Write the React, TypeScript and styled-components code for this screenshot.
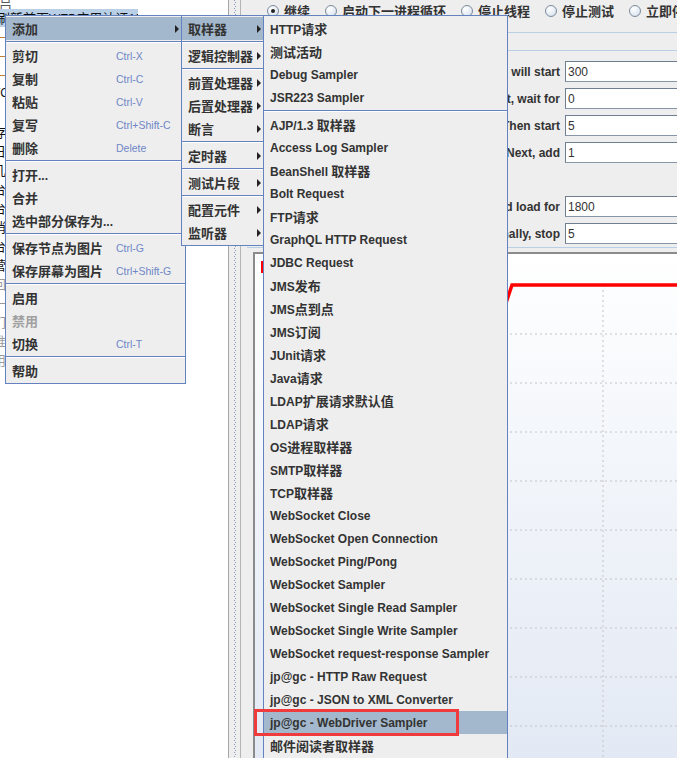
import React from "react";
import styled, { createGlobalStyle } from "styled-components";

const GlobalStyle = createGlobalStyle`
  * {
    box-sizing: border-box;
  }
  html,
  body {
    margin: 0;
    padding: 0;
    background: #eeeeee;
  }
  body {
    font-family: "Liberation Sans", "Noto Sans CJK SC", sans-serif;
    font-size: 12px;
    color: #333333;
  }
`;

// CJK runs are drawn a touch larger than the latin text, like the Swing Dialog font
const Han = styled.span`
  font-family: "Noto Sans CJK SC", sans-serif;
  font-size: 13px;
`;

const HAN_RUN = /([\u2e80-\u9fff\uff00-\uffef]+)/;

const Txt = ({ children }: { children: string }) => (
  <>
    {children.split(HAN_RUN).map((part, i) =>
      !part ? null : HAN_RUN.test(part) ? (
        <Han key={i}>{part}</Han>
      ) : (
        <span key={i}>{part}</span>
      )
    )}
  </>
);

const Screen = styled.div`
  position: relative;
  width: 677px;
  height: 758px;
  overflow: hidden;
  display: flex;
  background: #eeeeee;
`;

/* ---------- tree (left) ---------- */

const TreePane = styled.div`
  width: 228px;
  flex: none;
  background: #ffffff;
  overflow: hidden;
  padding-top: 0;
`;

const TreeRow = styled.div<{ $selected?: boolean; $muted?: boolean; $tone?: string; $h?: number }>`
  height: ${(p) => p.$h ?? 19}px;
  line-height: ${(p) => p.$h ?? 19}px;
  width: ${(p) => (p.$selected ? "138px" : "auto")};
  white-space: nowrap;
  overflow: hidden;
  text-indent: ${(p) => (p.$selected ? -3 : -7)}px;
  color: ${(p) => p.$tone ?? (p.$muted ? "#9a9a9a" : "#111111")};
  background: ${(p) => (p.$selected ? "#b8cfe5" : "transparent")};
`;

const TopStub = styled.div`
  height: 9px;
  line-height: 9px;
  overflow: hidden;
  color: #555555;
  font-size: 13px;
  text-indent: -1px;
`;

const Splitter = styled.div`
  width: 13px;
  flex: none;
  border-left: 1px solid #a5a5a5;
  border-right: 1px solid #b5b5b5;
  background-color: #eeeeee;
  background-image: repeating-linear-gradient(
      to bottom,
      #8c9db5 0 1px,
      transparent 1px 4px
    ),
    repeating-linear-gradient(
      to bottom,
      transparent 0 2px,
      #8c9db5 2px 3px,
      transparent 3px 4px
    );
  background-size: 1px 100%, 1px 100%;
  background-position: 5px 0, 6px 0;
  background-repeat: no-repeat;
`;

/* ---------- right pane ---------- */

const RightPane = styled.div`
  flex: 1;
  min-width: 0;
  display: flex;
  flex-direction: column;
`;

const ActionPanel = styled.div`
  height: 33px;
  margin-left: 6px;
  border-bottom: 1px solid #b8cfe5;
`;

const RadioRow = styled.div`
  height: 21px;
  display: flex;
  align-items: center;
  gap: 15px;
  padding-left: 20px;
  white-space: nowrap;
`;

const RadioOption = styled.label`
  display: flex;
  align-items: center;
  gap: 5px;
  font-weight: bold;
`;

const RadioDot = styled.span<{ $on?: boolean }>`
  position: relative;
  width: 12px;
  height: 12px;
  border-radius: 50%;
  border: 1px solid #7d8c9c;
  background: radial-gradient(circle at 35% 30%, #ffffff 0%, #e4ebf3 60%, #c3d1e0 100%);
  &::after {
    content: "";
    display: ${(p) => (p.$on ? "block" : "none")};
    position: absolute;
    left: 3px;
    top: 3px;
    width: 4px;
    height: 4px;
    border-radius: 50%;
    background: #222222;
  }
`;

const ParamPanel = styled.div`
  margin: 17px 0 0 6px;
  padding-top: 7px;
  border-top: 1px solid #b8cfe5;
  border-bottom: 1px solid #b8cfe5;
`;

const FormRow = styled.div`
  height: 27px;
  display: grid;
  grid-template-columns: 313px 1fr;
  column-gap: 5px;
  align-items: center;
`;

const FieldLabel = styled.span`
  text-align: right;
  font-weight: bold;
  white-space: nowrap;
`;

const Field = styled.input`
  width: 220px;
  height: 21px;
  padding: 0 2px;
  border: 1px solid #8796a6;
  border-top-color: #6f7f90;
  border-left-color: #6f7f90;
  background: #ffffff;
  font: 12px "Liberation Sans", sans-serif;
  color: #333333;
  outline: none;
`;

const ChartBox = styled.div`
  flex: 1;
  margin: 4px 0 0 12px;
  border-top: 2px solid #8b8b8b;
  border-left: 2px solid #8b8b8b;
  background: linear-gradient(#ffffff 0%, #f4f7fb 35%, #e3e9f4 100%);
  overflow: hidden;
  svg {
    display: block;
  }
`;

/* ---------- popup menus ---------- */

const Popup = styled.div<{ $x: number; $w: number; $z: number; $padR: number; $labelW: number }>`
  position: absolute;
  left: ${(p) => p.$x}px;
  top: 15px;
  width: ${(p) => p.$w}px;
  z-index: ${(p) => p.$z};
  padding: 1px 0;
  background: #eeeeee;
  border: 1px solid #6382bf;
  --pad-r: ${(p) => p.$padR}px;
  --label-w: ${(p) => p.$labelW}px;
`;

const Item = styled.div<{ $active?: boolean; $disabled?: boolean }>`
  height: 23px;
  display: flex;
  align-items: center;
  padding: 0 var(--pad-r) 0 6px;
  white-space: nowrap;
  font-weight: bold;
  color: ${(p) => (p.$disabled ? "#a0a0a0" : "#333333")};
  background: ${(p) => (p.$active ? "#a3b8cc" : "transparent")};
`;

const ItemLabel = styled.span`
  min-width: var(--label-w);
`;

const Accel = styled.span`
  font-weight: normal;
  font-size: 10.5px;
  color: #6f87c6;
`;

const Arrow = styled.span`
  margin-left: auto;
  width: 0;
  height: 0;
  border-top: 4px solid transparent;
  border-bottom: 4px solid transparent;
  border-left: 4px solid #222222;
`;

const Sep = styled.div`
  margin: 1px 0;
  border-top: 1px solid #6382bf;
  border-bottom: 1px solid #ffffff;
`;

const Callout = styled.div`
  position: absolute;
  left: 254px;
  top: 709px;
  width: 205px;
  height: 27px;
  border: 3px solid #ef3b3b;
  z-index: 4;
  pointer-events: none;
`;

type Entry =
  | "sep"
  | { label: string; accel?: string; sub?: boolean; active?: boolean; disabled?: boolean };

const editMenu: Entry[] = [
  { label: "添加", sub: true, active: true },
  "sep",
  { label: "剪切", accel: "Ctrl-X" },
  { label: "复制", accel: "Ctrl-C" },
  { label: "粘贴", accel: "Ctrl-V" },
  { label: "复写", accel: "Ctrl+Shift-C" },
  { label: "删除", accel: "Delete" },
  "sep",
  { label: "打开..." },
  { label: "合并" },
  { label: "选中部分保存为..." },
  "sep",
  { label: "保存节点为图片", accel: "Ctrl-G" },
  { label: "保存屏幕为图片", accel: "Ctrl+Shift-G" },
  "sep",
  { label: "启用" },
  { label: "禁用", disabled: true },
  { label: "切换", accel: "Ctrl-T" },
  "sep",
  { label: "帮助" },
];

const addMenu: Entry[] = [
  { label: "取样器", sub: true, active: true },
  "sep",
  { label: "逻辑控制器", sub: true },
  "sep",
  { label: "前置处理器", sub: true },
  { label: "后置处理器", sub: true },
  { label: "断言", sub: true },
  "sep",
  { label: "定时器", sub: true },
  "sep",
  { label: "测试片段", sub: true },
  "sep",
  { label: "配置元件", sub: true },
  { label: "监听器", sub: true },
];

const samplers = [
  "AJP/1.3 取样器",
  "Access Log Sampler",
  "BeanShell 取样器",
  "Bolt Request",
  "FTP请求",
  "GraphQL HTTP Request",
  "JDBC Request",
  "JMS发布",
  "JMS点到点",
  "JMS订阅",
  "JUnit请求",
  "Java请求",
  "LDAP扩展请求默认值",
  "LDAP请求",
  "OS进程取样器",
  "SMTP取样器",
  "TCP取样器",
  "WebSocket Close",
  "WebSocket Open Connection",
  "WebSocket Ping/Pong",
  "WebSocket Sampler",
  "WebSocket Single Read Sampler",
  "WebSocket Single Write Sampler",
  "WebSocket request-response Sampler",
  "jp@gc - HTTP Raw Request",
  "jp@gc - JSON to XML Converter",
  "jp@gc - WebDriver Sampler",
  "邮件阅读者取样器",
  "调试取样器",
];

const samplerMenu: Entry[] = [
  { label: "HTTP请求" },
  { label: "测试活动" },
  { label: "Debug Sampler" },
  { label: "JSR223 Sampler" },
  "sep",
  ...samplers.map((label) => ({ label, active: label === "jp@gc - WebDriver Sampler" })),
];

const MenuList = ({
  entries,
  x,
  w,
  z,
  padR,
  labelW = 0,
}: {
  entries: Entry[];
  x: number;
  w: number;
  z: number;
  padR: number;
  labelW?: number;
}) => (
  <Popup $x={x} $w={w} $z={z} $padR={padR} $labelW={labelW}>
    {entries.map((e, i) =>
      e === "sep" ? (
        <Sep key={i} />
      ) : (
        <Item key={i} $active={e.active} $disabled={e.disabled}>
          <ItemLabel>
            <Txt>{e.label}</Txt>
          </ItemLabel>
          {e.accel && <Accel>{e.accel}</Accel>}
          {e.sub && <Arrow />}
        </Item>
      )
    )}
  </Popup>
);

const treeRows: { text: string; muted?: boolean; tone?: string }[] = [
  { text: "一", tone: "#c0803a" },
  { text: "一", tone: "#c0803a" },
  { text: "一", tone: "#c0803a" },
  { text: "TCP" },
  { text: "" },
  { text: "存储" },
  { text: "日志" },
  { text: "几何" },
  { text: "台账" },
  { text: "台账" },
  { text: "消息" },
  { text: "台账" },
  { text: "营销" },
  { text: "回收", muted: true },
  { text: "一览", muted: true },
  { text: "们的", muted: true },
  { text: "推送", muted: true },
  { text: "用户", muted: true },
];

const formRows: ([string, string] | null)[] = [
  ["This group will start", "300"],
  ["First, wait for", "0"],
  ["Then start", "5"],
  ["Next, add", "1"],
  null,
  ["Then hold load for", "1800"],
  ["Finally, stop", "5"],
];

const radios = ["继续", "启动下一进程循环", "停止线程", "停止测试", "立即停止测试"];

const Chart = () => {
  const hLines = Array.from({ length: 10 }, (_, k) => 31 + 49 * (k + 1));
  return (
    <svg width="422" height="504" viewBox="0 0 422 504">
      <rect x="6" y="7" width="10" height="12" fill="#ff0000" />
      {hLines.map((y) => (
        <line key={y} x1="30" y1={y} x2="422" y2={y} stroke="#c4c4c4" strokeDasharray="2 3" />
      ))}
      <line x1="348" y1="31" x2="348" y2="504" stroke="#c4c4c4" strokeDasharray="2 3" />
      <polyline points="240,82 257,31 430,31" fill="none" stroke="#ff0000" strokeWidth="3.5" />
    </svg>
  );
};

const App = () => (
  <>
    <GlobalStyle />
    <Screen>
      <TreePane>
        <TopStub>吕</TopStub>
        <TreeRow $selected $h={18}>
          <Txt>刷新首页WEB应用认证100</Txt>
        </TreeRow>
        {treeRows.map((r, i) => (
          <TreeRow key={i} $muted={r.muted} $tone={r.tone}>
            <Txt>{r.text}</Txt>
          </TreeRow>
        ))}
      </TreePane>
      <Splitter />
      <RightPane>
        <ActionPanel>
          <RadioRow>
            {radios.map((r, i) => (
              <RadioOption key={r}>
                <RadioDot $on={i === 0} />
                <Txt>{r}</Txt>
              </RadioOption>
            ))}
          </RadioRow>
        </ActionPanel>
        <ParamPanel>
          {formRows.map((row, i) => (
            <FormRow key={i}>
              {row && (
                <>
                  <FieldLabel>{row[0]}</FieldLabel>
                  <Field readOnly value={row[1]} />
                </>
              )}
            </FormRow>
          ))}
        </ParamPanel>
        <ChartBox>
          <Chart />
        </ChartBox>
      </RightPane>

      <MenuList entries={editMenu} x={5} w={181} z={1} padR={6} labelW={104} />
      <MenuList entries={addMenu} x={181} w={83} z={2} padR={2} />
      <MenuList entries={samplerMenu} x={263} w={245} z={3} padR={6} />
      <Callout />
    </Screen>
  </>
);

export default App;
